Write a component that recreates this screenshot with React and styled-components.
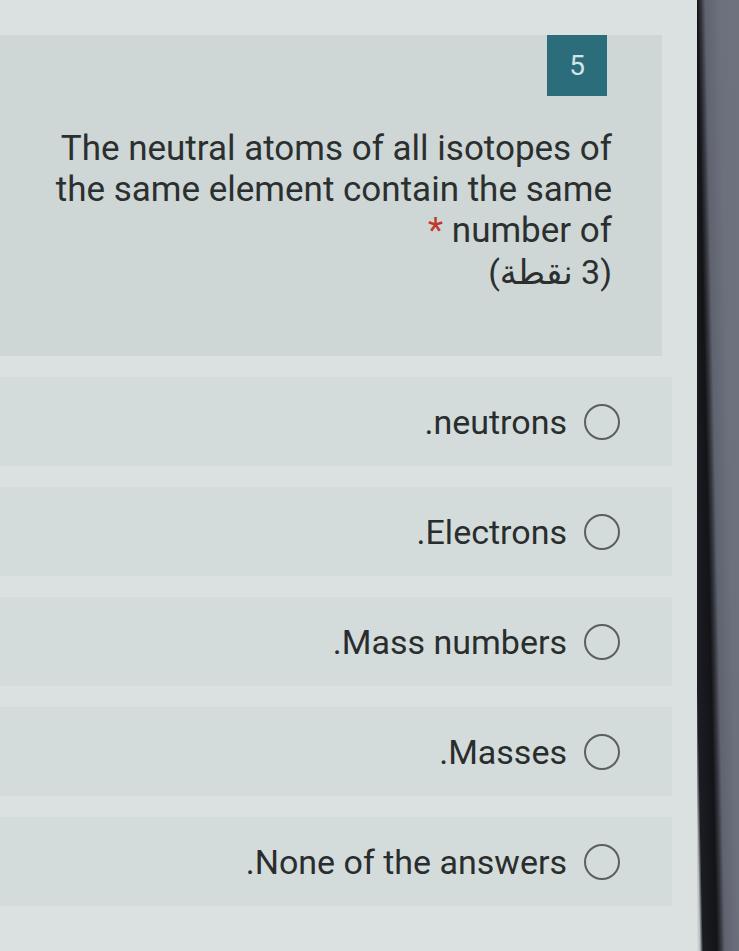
import React from "react";
import styled, { createGlobalStyle } from "styled-components";

const Global = createGlobalStyle`
  html, body { margin: 0; padding: 0; background: #dae1e0; }
  body { font-family: Roboto, "Noto Sans", "DejaVu Sans", sans-serif; }
  * { box-sizing: border-box; }
`;

const Screen = styled.div`
  display: flex;
  width: 739px;
  height: 951px;
  overflow: hidden;
  background: #dae1e0;
`;

const Content = styled.div`
  flex: 1;
  display: flex;
  flex-direction: column;
  gap: 21px;
  padding-top: 35px;
`;

const Bezel = styled.div`
  width: 42px;
  flex: none;
  background: linear-gradient(
    88.8deg,
    #dae1e0 0px,
    #b9c0c1 3px,
    #1c1d22 6px,
    #131418 20px,
    #34363d 24px,
    #5f6370 28px,
    #6c707c 42px,
    #6f737e 64px
  );
`;

const QuestionCard = styled.div`
  width: 662px;
  background: #ced7d6;
  padding: 0 50px 63px 32px;
  display: flex;
  flex-direction: column;
  align-items: flex-end;
`;

const Badge = styled.div`
  width: 60px;
  height: 61px;
  margin-right: 5px;
  background: #2c6d7c;
  color: #d3e4e8;
  font-size: 28px;
  display: flex;
  align-items: center;
  justify-content: center;
`;

const QuestionText = styled.div`
  direction: rtl;
  text-align: right;
  width: 100%;
  margin-top: 32px;
  font-size: 35px;
  line-height: 41px;
  color: #2c2f2f;
`;

const Required = styled.span`
  color: #c0392b;
`;

const Points = styled.div`
  direction: rtl;
  text-align: right;
  width: 100%;
  font-size: 34px;
  line-height: 42px;
  color: #2c2f2f;
`;

const Option = styled.label`
  width: 672px;
  height: 89px;
  background: #d3dcdb;
  direction: rtl;
  display: flex;
  align-items: center;
  gap: 17px;
  padding-right: 52px;
  font-size: 34px;
  color: #2a2d2d;
`;

const Radio = styled.span`
  width: 36px;
  height: 36px;
  border-radius: 50%;
  border: 2px solid #5a5f5f;
  flex: none;
`;

const options = ["neutrons.", "Electrons.", "Mass numbers.", "Masses.", "None of the answers."];

export default function App() {
  return (
    <>
      <Global />
      <Screen>
        <Content>
          <QuestionCard>
            <Badge>5</Badge>
            <QuestionText>
              The neutral atoms of all isotopes of the same element contain the same number
              of{"\u00a0"}
              <Required>*</Required>
            </QuestionText>
            <Points>(3 نقطة)</Points>
          </QuestionCard>
          {options.map((o) => (
            <Option key={o}>
              <Radio />
              <span>{o}</span>
            </Option>
          ))}
        </Content>
        <Bezel />
      </Screen>
    </>
  );
}
